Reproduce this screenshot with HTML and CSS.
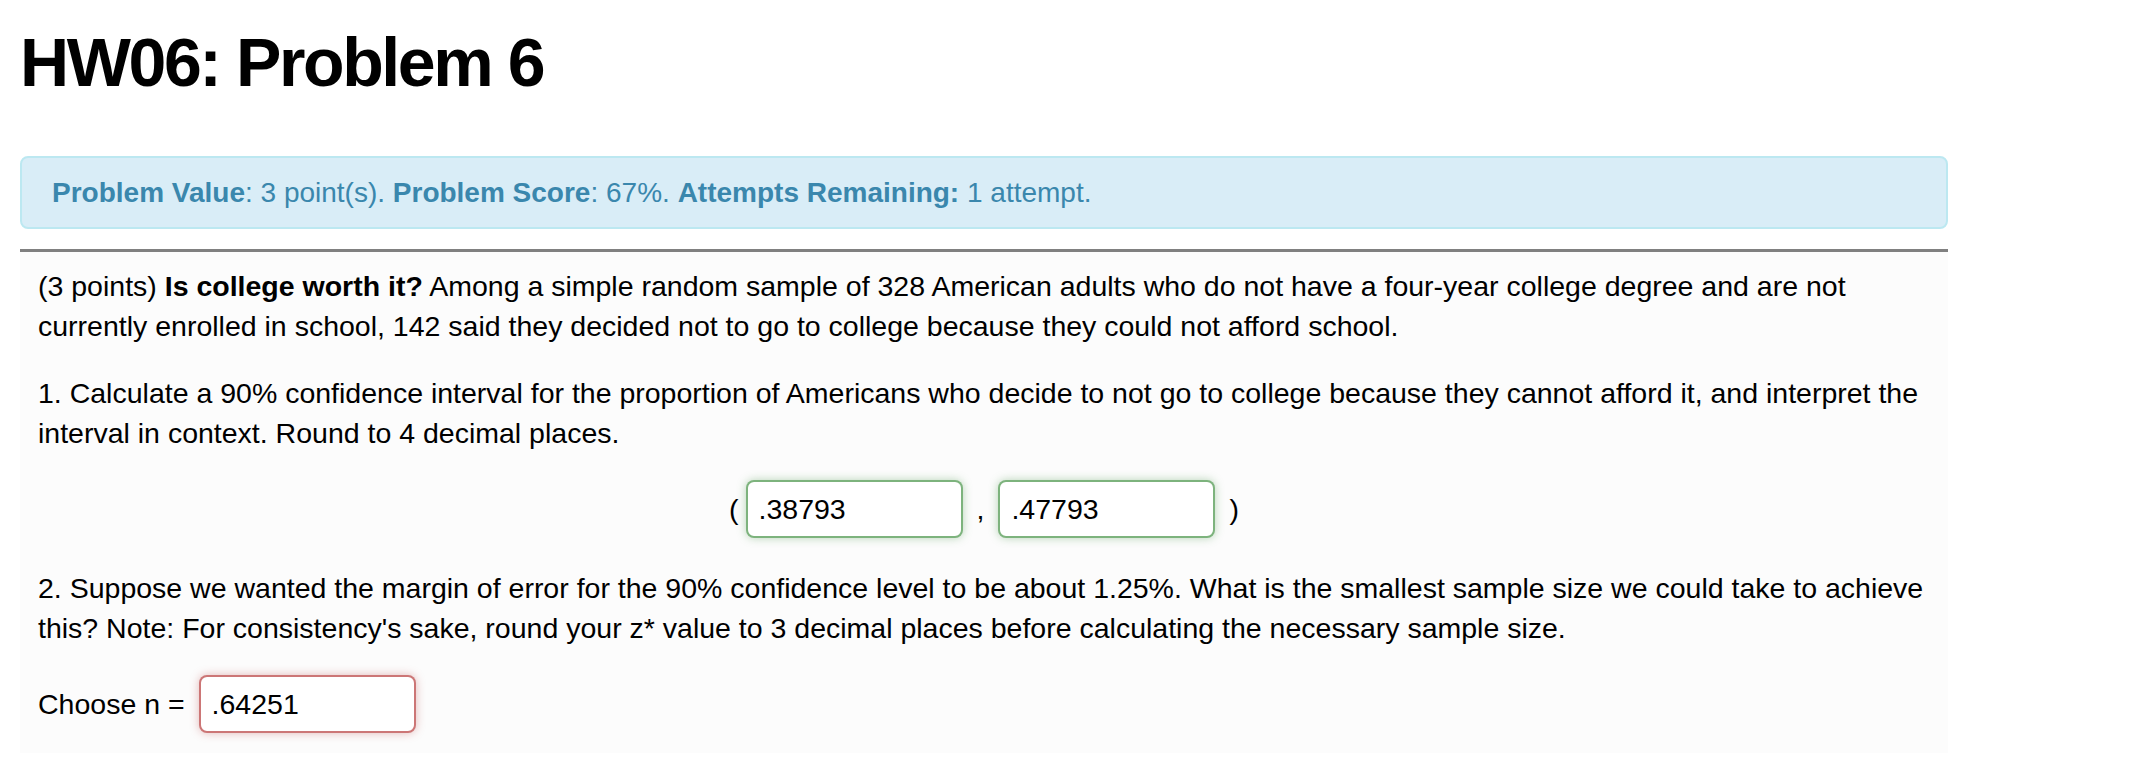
FILE: index.html
```html
<!DOCTYPE html>
<html>
<head>
<meta charset="utf-8">
<link rel="stylesheet" href="styles.css">
</head>
<body>
<div class="page">
  <h1 class="title">HW06: Problem 6</h1>
  <div class="alert">
    <span><b>Problem Value</b>: 3 point(s). <b>Problem Score</b>: 67%. <b>Attempts Remaining:</b> 1 attempt.</span>
  </div>
  <div class="problem">
    <p>(3 points) <b>Is college worth it?</b> Among a simple random sample of 328 American adults who do not have a four-year college degree and are not currently enrolled in school, 142 said they decided not to go to college because they could not afford school.</p>
    <p>1. Calculate a 90% confidence interval for the proportion of Americans who decide to not go to college because they cannot afford it, and interpret the interval in context. Round to 4 decimal places.</p>
    <div class="interval">
      <span class="paren paren-open">(</span>
      <span class="field correct">.38793</span>
      <span class="comma">,</span>
      <span class="field correct">.47793</span>
      <span class="paren">)</span>
    </div>
    <p>2. Suppose we wanted the margin of error for the 90% confidence level to be about 1.25%. What is the smallest sample size we could take to achieve this? Note: For consistency's sake, round your z* value to 3 decimal places before calculating the necessary sample size.</p>
    <div class="choose">
      <span class="label">Choose n =</span>
      <span class="field incorrect">.64251</span>
    </div>
  </div>
</div>
</body>
</html>
```
FILE: styles.css
```css
html, body {
  margin: 0;
  padding: 0;
  background: #ffffff;
}
.page {
  width: 1928px;
  margin-left: 20px;
  font-family: "Liberation Sans", Arial, sans-serif;
  color: #000;
}
.title {
  margin: 0;
  padding-top: 22px;
  font-size: 68px;
  line-height: 80px;
  font-weight: bold;
  letter-spacing: -2.4px;
}
.alert {
  margin-top: 54px;
  box-sizing: border-box;
  height: 73px;
  display: flex;
  align-items: center;
  padding: 0 30px;
  background: #d9edf7;
  border: 2px solid #bce8f1;
  border-radius: 8px;
  color: #3a87ad;
  font-size: 28px;
}
.problem {
  margin-top: 20px;
  border-top: 3px solid #808080;
  background: #fcfcfc;
  padding: 14px 18px 20px 18px;
  font-size: 28.5px;
  line-height: 40px;
}
.problem p {
  margin: 0 0 27px 0;
}
.interval {
  display: flex;
  justify-content: center;
  align-items: center;
  gap: 14px;
  margin-bottom: 30px;
}
.paren-open {
  margin-right: -7px;
}
.field {
  box-sizing: border-box;
  width: 217px;
  height: 58px;
  display: flex;
  align-items: center;
  padding: 0 11px;
  background: #fff;
  border-radius: 8px;
  font-size: 28.5px;
}
.correct {
  border: 2px solid rgba(81, 153, 81, 0.75);
  box-shadow: 0 0 10px rgba(81, 153, 81, 0.4);
}
.incorrect {
  border: 2px solid rgba(191, 84, 84, 0.8);
  box-shadow: 0 0 10px rgba(191, 84, 84, 0.4);
}
.choose {
  display: flex;
  align-items: center;
  gap: 14px;
}
```
